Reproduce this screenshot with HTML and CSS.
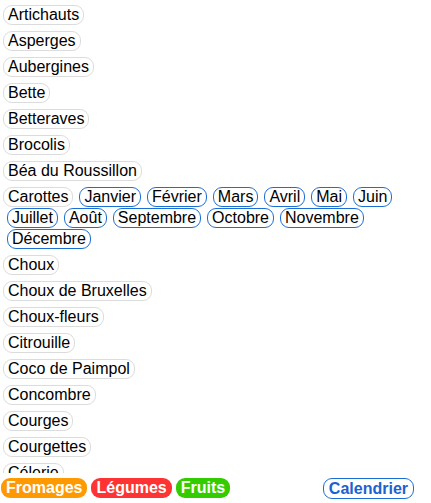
FILE: index.html
```html
<!DOCTYPE html>
<html lang="fr">
<head>
    <meta charset="UTF-8">
    <meta name="viewport" content="width=device-width, initial-scale=1.0">
    <title>Calendrier des légumes</title>
    <link rel="stylesheet" href="styles.css">
</head>
<body>
    <div class="list">
        <div class="row"><span class="chip">Artichauts</span></div>
        <div class="row"><span class="chip">Asperges</span></div>
        <div class="row"><span class="chip">Aubergines</span></div>
        <div class="row"><span class="chip">Bette</span></div>
        <div class="row"><span class="chip">Betteraves</span></div>
        <div class="row"><span class="chip">Brocolis</span></div>
        <div class="row"><span class="chip">Béa du Roussillon</span></div>
        <div class="row">
            <span class="chip">Carottes</span>
            <span class="month">Janvier</span>
            <span class="month">Février</span>
            <span class="month">Mars</span>
            <span class="month">Avril</span>
            <span class="month">Mai</span>
            <span class="month">Juin</span>
            <span class="month">Juillet</span>
            <span class="month">Août</span>
            <span class="month">Septembre</span>
            <span class="month">Octobre</span>
            <span class="month">Novembre</span>
            <span class="month">Décembre</span>
        </div>
        <div class="row"><span class="chip">Choux</span></div>
        <div class="row"><span class="chip">Choux de Bruxelles</span></div>
        <div class="row"><span class="chip">Choux-fleurs</span></div>
        <div class="row"><span class="chip">Citrouille</span></div>
        <div class="row"><span class="chip">Coco de Paimpol</span></div>
        <div class="row"><span class="chip">Concombre</span></div>
        <div class="row"><span class="chip">Courges</span></div>
        <div class="row"><span class="chip">Courgettes</span></div>
        <div class="row"><span class="chip">Célerie</span></div>
    </div>

    <div class="bar">
        <div class="filters">
            <span class="tag tag-fromages">Fromages</span>
            <span class="tag tag-legumes">Légumes</span>
            <span class="tag tag-fruits">Fruits</span>
        </div>
        <span class="calendar">Calendrier</span>
    </div>
</body>
</html>
```

FILE: styles.css
```css
html, body {
    margin: 0;
    height: 100%;
    overflow: hidden;
    background: #fff;
    font-family: "Liberation Sans", Arial, sans-serif;
    font-size: 16px;
    color: #000;
}
.list {
    height: 468px;
    overflow: hidden;
    padding: 5px 3px 0 3px;
}
.row {
    display: flex;
    flex-wrap: wrap;
    align-items: flex-start;
    row-gap: 1px;
    margin-bottom: 6px;
}
.chip {
    line-height: 18px;
    padding: 0 4px;
    border: 1px solid #dcdcdc;
    border-radius: 9px;
    margin-right: 2px;
}
.month {
    line-height: 18px;
    padding: 0 4px;
    border: 1px solid #1b6fd4;
    border-radius: 9px;
    margin-left: 4px;
    margin-right: 2px;
}
.bar {
    height: 30px;
    display: flex;
    align-items: flex-start;
    justify-content: space-between;
    padding: 5px 17px 0 1px;
    box-sizing: border-box;
    background: #fff;
}
.filters {
    display: flex;
    gap: 4px;
}
.tag {
    font-weight: bold;
    color: #fff;
    line-height: 18px;
    padding: 1px 5px;
    border-radius: 9px;
}
.tag-fromages {
    background: #ff9900;
}
.tag-legumes {
    background: #ff3333;
}
.tag-fruits {
    background: #33cc00;
}
.calendar {
    font-weight: bold;
    color: #1b62cf;
    line-height: 19px;
    padding: 0 5px;
    border: 1px solid #1b6fd4;
    border-radius: 9px;
}
```
